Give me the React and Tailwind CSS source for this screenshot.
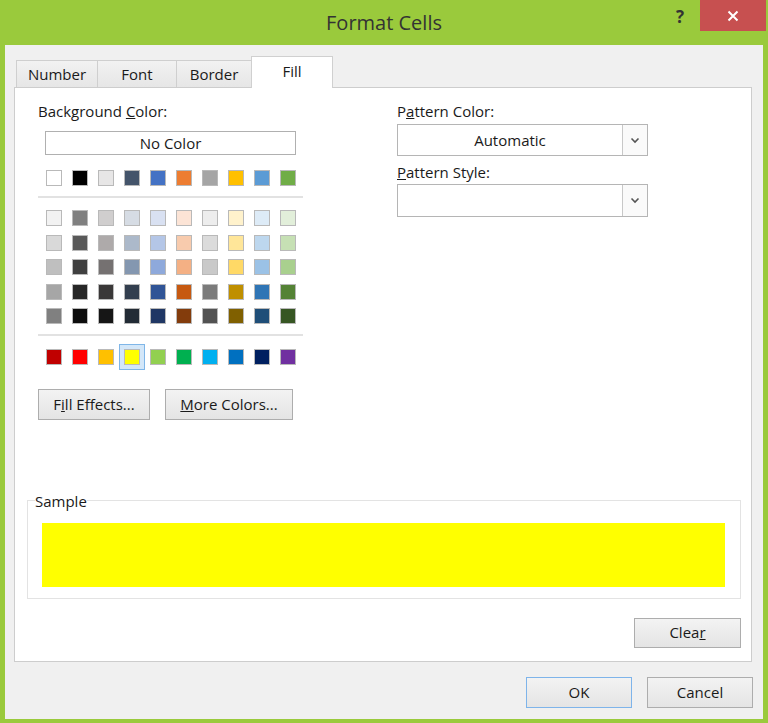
import React from 'react'

const font = { fontFamily: '"Open Sans", "Noto Sans", sans-serif' }

const themeTop = ['#FFFFFF', '#000000', '#E7E6E6', '#44546A', '#4472C4', '#ED7D31', '#A5A5A5', '#FFC000', '#5B9BD5', '#70AD47']

const themeShades = [
  ['#F2F2F2', '#808080', '#D0CECE', '#D6DCE4', '#D9E1F2', '#FCE4D6', '#EDEDED', '#FFF2CC', '#DDEBF7', '#E2EFDA'],
  ['#D9D9D9', '#595959', '#AEAAAA', '#ACB9CA', '#B4C6E7', '#F8CBAD', '#DBDBDB', '#FFE699', '#BDD7EE', '#C6E0B4'],
  ['#BFBFBF', '#404040', '#757171', '#8497B0', '#8EA9DB', '#F4B084', '#C9C9C9', '#FFD966', '#9BC2E6', '#A9D08E'],
  ['#A6A6A6', '#262626', '#3A3838', '#333F4F', '#305496', '#C65911', '#7B7B7B', '#BF8F00', '#2F75B5', '#548235'],
  ['#808080', '#0D0D0D', '#161616', '#222B35', '#203764', '#833C0C', '#525252', '#806000', '#1F4E78', '#375623'],
]

const standard = ['#C00000', '#FF0000', '#FFC000', '#FFFF00', '#92D050', '#00B050', '#00B0F0', '#0070C0', '#002060', '#7030A0']

// one colour chip
function Swatch({ color }) {
  return (
    <span
      className="block w-4 h-4 border border-[#b9b9b9]"
      style={{ backgroundColor: color }}
    />
  )
}

function SwatchRow({ colors, selected }) {
  return (
    <div className="flex">
      {colors.map((c, i) => (
        <div
          key={i}
          className={`w-[26px] h-[26px] flex items-center justify-center ${i === selected ? 'border border-[#7fb6e8] bg-[#d3e7f9]' : ''}`}
        >
          <Swatch color={c} />
        </div>
      ))}
    </div>
  )
}

function Button({ children, className = '' }) {
  return (
    <div
      className={`flex items-center justify-center border border-[#adadad] bg-linear-to-b from-[#f3f3f3] to-[#e4e4e4] text-[15px] text-[#1a1a1a] font-medium ${className}`}
    >
      {children}
    </div>
  )
}

function Dropdown({ value, className = '' }) {
  return (
    <div className={`flex w-[251px] border border-[#b5b5b5] bg-white ${className}`}>
      <div className="flex-1 flex items-center justify-center text-[15px] font-medium text-[#1a1a1a]">{value}</div>
      <div className="w-[25px] flex items-center justify-center border-l border-[#c8c8c8] bg-[#fafafa]">
        <svg width="10" height="7" viewBox="0 0 10 7">
          <polyline points="1.5,1.5 5,5 8.5,1.5" fill="none" stroke="#555" strokeWidth="1.6" />
        </svg>
      </div>
    </div>
  )
}

function Tab({ label, active, className = '' }) {
  return (
    <div
      className={`flex items-center justify-center border border-b-0 text-[15px] font-medium text-[#1a1a1a] ${active
        ? 'h-[32px] bg-white border-[#d0d0d0] relative z-10 pb-[3px]'
        : 'h-[27px] bg-linear-to-b from-[#f2f2f2] to-[#e6e6e6] border-[#cfcfcf] mb-px'} ${className}`}
    >
      {label}
    </div>
  )
}

export default function App() {
  return (
    <div className="w-[768px] h-[723px] bg-[#9aca3c] flex flex-col" style={font}>
      {/* title bar */}
      <div className="h-[45px] flex shrink-0">
        <div className="w-[98px]" />
        <div className="flex-1 text-center text-[20px] text-[#333] leading-[45px]">Format Cells</div>
        <div className="w-[98px] flex items-start">
          <span className="w-[20px] mt-[6px] text-center text-[17px] font-bold text-[#333] leading-[22px]">?</span>
          <div className="ml-[10px] w-[66px] h-[31px] bg-[#c75050] flex items-center justify-center">
            <svg width="12" height="12" viewBox="0 0 12 12">
              <path d="M1.5 1.5 L10.5 10.5 M10.5 1.5 L1.5 10.5" stroke="#fff" strokeWidth="2" />
            </svg>
          </div>
        </div>
      </div>

      {/* dialog body */}
      <div className="flex-1 mx-[5px] mb-[4px] bg-[#f0f0f0] flex flex-col pt-[11px] pb-[11px]">
        <div className="flex items-end pl-[11px]">
          <Tab label="Number" className="w-[82px]" />
          <Tab label="Font" className="w-[80px] -ml-px" />
          <Tab label="Border" className="w-[76px] -ml-px" />
          <Tab label="Fill" active className="w-[82px] -ml-px" />
        </div>

        <div className="ml-[9px] mr-[11px] -mt-px bg-white border border-[#cdcdcd] text-[#1a1a1a] font-medium pb-[13px]">
          <div className="flex pt-[14px] pl-[23px]">
            {/* left column */}
            <div className="w-[265px] flex flex-col">
              <div className="text-[15px] leading-[18px]">Background <u>C</u>olor:</div>
              <div className="ml-[7px] mt-[11px] w-[251px] h-[24px] border border-[#b0b0b0] flex items-center justify-center text-[15px]">
                No Color
              </div>
              <div className="mt-[10px] ml-[3px]">
                <SwatchRow colors={themeTop} />
              </div>
              <div className="mt-[5px] h-[2px] bg-[#e2e2e2]" />
              <div className="mt-[7px] ml-[3px] flex flex-col">
                {themeShades.map((row, i) => (
                  <div key={i} className="-mb-[1.5px]">
                    <SwatchRow colors={row} />
                  </div>
                ))}
              </div>
              <div className="mt-[6px] h-[2px] bg-[#e2e2e2]" />
              <div className="mt-[8px] ml-[3px]">
                <SwatchRow colors={standard} selected={3} />
              </div>
              <div className="mt-[19px] flex gap-[15px]">
                <Button className="w-[112px] h-[31px]">F<u>i</u>ll Effects...</Button>
                <Button className="w-[128px] h-[31px]"><u>M</u>ore Colors...</Button>
              </div>
            </div>

            {/* right column */}
            <div className="ml-[94px] flex flex-col">
              <div className="text-[15px] leading-[18px]">P<u>a</u>ttern Color:</div>
              <Dropdown value="Automatic" className="mt-[4px] h-[32px]" />
              <div className="mt-[7px] text-[15px] leading-[18px]">
                <u>P</u>attern Style:
              </div>
              <Dropdown value="" className="mt-[3px] h-[33px]" />
            </div>
          </div>

          <fieldset className="mt-[72px] ml-[12px] mr-[10px] border border-[#e3e3e3] pt-[13px] pb-[11px] pl-[14px] pr-[15px]">
            <legend className="-ml-[7px] text-[15px] leading-[18px]">Sample</legend>
            <div className="h-[64px] bg-[#ffff00]" />
          </fieldset>

          <div className="mt-[19px] mr-[10px] flex justify-end">
            <Button className="w-[107px] h-[30px]">Clea<u>r</u></Button>
          </div>
        </div>

        <div className="mt-[15px] mr-[10px] flex justify-end gap-[15px]">
          <Button className="w-[106px] h-[31px] !border-[#7eb4ea]">OK</Button>
          <Button className="w-[106px] h-[31px]">Cancel</Button>
        </div>
      </div>
    </div>
  )
}
